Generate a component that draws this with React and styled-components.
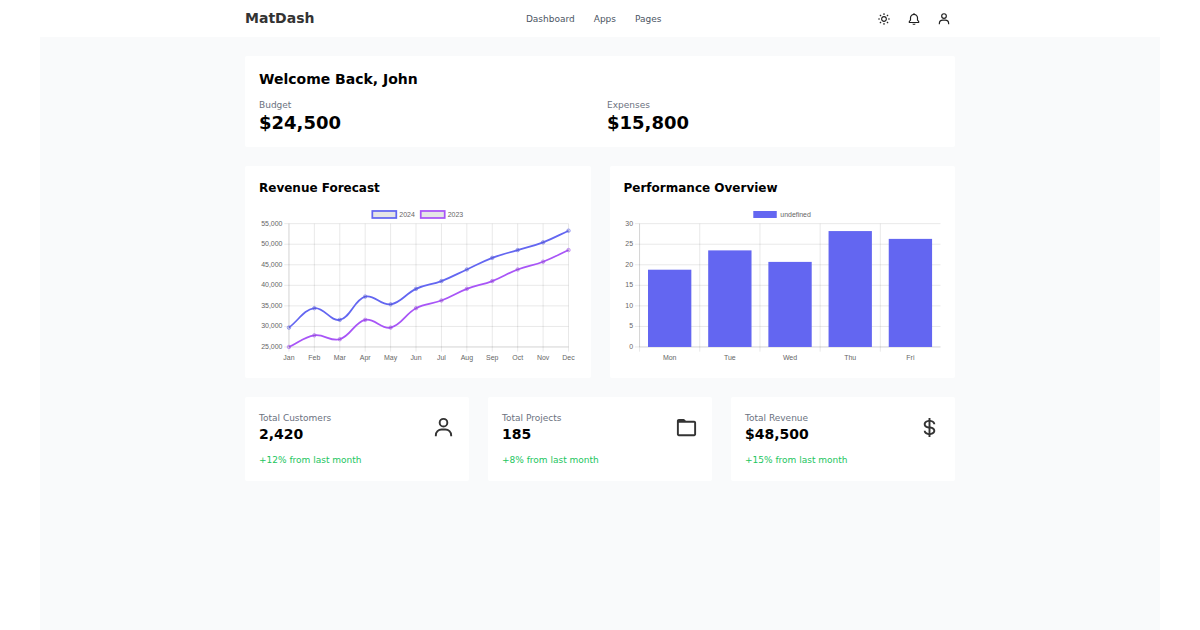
import React from "react";
import styled, { createGlobalStyle } from "styled-components";
import { BiBell, BiDollar, BiFolder, BiSun, BiUser } from "react-icons/bi";

const GlobalStyle = createGlobalStyle`
  * {
    box-sizing: border-box;
  }

  body {
    margin: 0;
    background: #ffffff;
    color: #000000;
    font-family: "DejaVu Sans", sans-serif;
    font-size: 9px;
    line-height: 14px;
  }
`;

const Page = styled.div`
  min-height: 100vh;
  padding: 0 40px;
  display: flex;
  flex-direction: column;
`;
const Container = styled.div`
  width: 100%;
  max-width: 710px;
  margin: 0 auto;
`;
const Header = styled.header`
  background: #ffffff;
`;
const HeaderRow = styled(Container)`
  height: 37px;
  display: flex;
  align-items: center;
  justify-content: space-between;
`;
const Logo = styled.a`
  color: #333333;
  font-size: 14px;
  font-weight: bold;
  line-height: 19px;
  text-decoration: none;
`;
const Nav = styled.nav`
  display: flex;
  gap: 19px;
`;
const NavLink = styled.a`
  color: #4b5563;
  text-decoration: none;
`;
const Actions = styled.div`
  display: flex;
  gap: 8px;
`;
const IconButton = styled.button`
  display: flex;
  padding: 4px;
  border: 0;
  background: none;
  color: #1f1f1f;
  font-size: 14px;
  cursor: pointer;
`;
const Main = styled.main`
  flex: 1;
  padding: 19px 0;
  background: #f9fafb;
`;
const Content = styled(Container)`
  display: flex;
  flex-direction: column;
  gap: 19px;
`;
const Grid = styled.div`
  display: grid;
  grid-template-columns: repeat(${({ $columns }) => $columns}, 1fr);
  gap: ${({ $gap }) => $gap || 19}px;
`;
const Card = styled.section`
  min-width: 0;
  padding: 14px;
  border-radius: 2px;
  background: #ffffff;
`;
const Heading = styled.h1`
  margin: 0 0 9px;
  font-size: 14px;
  line-height: 19px;
`;
const CardTitle = styled.h2`
  margin: 0 0 9px;
  font-size: 12px;
  line-height: 16px;
`;
const Label = styled.p`
  margin: 0;
  color: #6b7280;
`;
const Amount = styled.p`
  margin: 0;
  font-size: 18px;
  font-weight: bold;
  line-height: 21px;
`;
const StatRow = styled.div`
  display: flex;
  align-items: center;
  justify-content: space-between;
`;
const StatValue = styled.p`
  margin: 0;
  font-size: 14px;
  font-weight: bold;
  line-height: 19px;
`;
const StatIcon = styled.span`
  display: flex;
  color: #333333;
  font-size: 23px;
`;
const Change = styled.p`
  margin: 9px 0 0;
  color: #22c55e;
`;
const Chart = styled.svg`
  display: block;
  width: 100%;
  height: auto;
  overflow: visible;

  text {
    fill: #666666;
    font-family: "Liberation Sans", Arial, sans-serif;
    font-size: 7px;
  }
`;

const MONTHS = [
  "Jan",
  "Feb",
  "Mar",
  "Apr",
  "May",
  "Jun",
  "Jul",
  "Aug",
  "Sep",
  "Oct",
  "Nov",
  "Dec",
];

const REVENUE = [
  {
    label: "2024",
    color: "#6366f1",
    legendX: 113.5,
    data: [
      29715, 34430, 31600, 37260, 35370, 39145, 41030, 43860, 46690, 48575,
      50460, 53290,
    ],
  },
  {
    label: "2023",
    color: "#a855f7",
    legendX: 162,
    data: [
      25000, 27830, 26885, 31600, 29715, 34430, 36315, 39145, 41030, 43860,
      45745, 48575,
    ],
  },
];

const PERFORMANCE = [
  { day: "Mon", value: 18.8 },
  { day: "Tue", value: 23.5 },
  { day: "Wed", value: 20.7 },
  { day: "Thu", value: 28.2 },
  { day: "Fri", value: 26.3 },
];

const STATS = [
  { label: "Total Customers", value: "2,420", change: "+12%", icon: BiUser },
  { label: "Total Projects", value: "185", change: "+8%", icon: BiFolder },
  { label: "Total Revenue", value: "$48,500", change: "+15%", icon: BiDollar },
];

const TOP = 18.7;
const BOTTOM = 142.2;
const TICK = 4.7;
const GRID_COLOR = "rgba(0, 0, 0, 0.1)";

const scaleY = (value, min, max) =>
  BOTTOM - ((value - min) / (max - min)) * (BOTTOM - TOP);

const clampY = (y) => Math.min(BOTTOM, Math.max(TOP, y));

// control points are weighted by the distance to the neighbouring points
const smoothPath = (points, tension = 0.4) => {
  const controls = points.map((point, i) => {
    const prev = points[i - 1] || point;
    const next = points[i + 1] || point;
    const before = Math.hypot(point.x - prev.x, point.y - prev.y);
    const after = Math.hypot(next.x - point.x, next.y - point.y);
    const a = (tension * before) / (before + after);
    const b = (tension * after) / (before + after);
    return {
      inX: point.x - a * (next.x - prev.x),
      inY: clampY(point.y - a * (next.y - prev.y)),
      outX: point.x + b * (next.x - prev.x),
      outY: clampY(point.y + b * (next.y - prev.y)),
    };
  });

  return points.reduce((path, point, i) => {
    if (i === 0) return `M${point.x} ${point.y}`;
    const from = controls[i - 1];
    const to = controls[i];
    return `${path} C${from.outX} ${from.outY} ${to.inX} ${to.inY} ${point.x} ${point.y}`;
  }, "");
};

const GridLines = ({ left, right, columns, ticks, min, max }) => (
  <g stroke={GRID_COLOR} strokeWidth="0.9">
    {columns.map((x) => (
      <line key={x} x1={x} x2={x} y1={TOP} y2={BOTTOM + TICK} />
    ))}
    {ticks.map((tick) => {
      const y = scaleY(tick, min, max);
      return <line key={tick} x1={left - TICK} x2={right} y1={y} y2={y} />;
    })}
    <line x1={left} x2={left} y1={TOP} y2={BOTTOM} />
    <line x1={left} x2={right} y1={BOTTOM} y2={BOTTOM} />
  </g>
);

const TickLabels = ({ left, ticks, min, max }) =>
  ticks.map((tick) => (
    <text
      key={tick}
      x={left - 6.5}
      y={scaleY(tick, min, max) + 2}
      textAnchor="end"
    >
      {tick.toLocaleString("en-US")}
    </text>
  ));

const RevenueChart = () => {
  const left = 30;
  const right = 310;
  const min = 25000;
  const max = 55000;
  const ticks = [25000, 30000, 35000, 40000, 45000, 50000, 55000];
  const columns = MONTHS.map((_, i) => left + (i * (right - left)) / 11);

  return (
    <Chart viewBox="0 0 318 159" role="img" aria-label="Revenue by month">
      <GridLines
        left={left}
        right={right}
        columns={columns}
        ticks={ticks}
        min={min}
        max={max}
      />
      <TickLabels left={left} ticks={ticks} min={min} max={max} />
      {MONTHS.map((month, i) => (
        <text key={month} x={columns[i]} y="155" textAnchor="middle">
          {month}
        </text>
      ))}
      {[...REVENUE].reverse().map(({ label, color, data }) => {
        const points = data.map((value, i) => ({
          x: columns[i],
          y: scaleY(value, min, max),
        }));
        return (
          <g key={label} stroke={color}>
            <path d={smoothPath(points)} fill="none" strokeWidth="1.75" />
            {points.map(({ x, y }) => (
              <circle
                key={x}
                cx={x}
                cy={y}
                r="1.75"
                fill={GRID_COLOR}
                strokeWidth="0.6"
              />
            ))}
          </g>
        );
      })}
      {REVENUE.map(({ label, color, legendX }) => (
        <g key={label}>
          <rect
            x={legendX}
            y="6"
            width="24"
            height="7"
            fill={GRID_COLOR}
            stroke={color}
            strokeWidth="1.75"
          />
          <text x={legendX + 27} y="12">
            {label}
          </text>
        </g>
      ))}
    </Chart>
  );
};

const PerformanceChart = () => {
  const left = 15.6;
  const right = 317;
  const min = 0;
  const max = 30;
  const ticks = [0, 5, 10, 15, 20, 25, 30];
  const step = (right - left) / PERFORMANCE.length;
  const barWidth = step * 0.72;

  return (
    <Chart viewBox="0 0 318 159" role="img" aria-label="Performance by day">
      <GridLines
        left={left}
        right={right}
        columns={PERFORMANCE.map((_, i) => left + i * step)}
        ticks={ticks}
        min={min}
        max={max}
      />
      <TickLabels left={left} ticks={ticks} min={min} max={max} />
      {PERFORMANCE.map(({ day, value }, i) => {
        const center = left + (i + 0.5) * step;
        const y = scaleY(value, min, max);
        return (
          <g key={day}>
            <rect
              x={center - barWidth / 2}
              y={y}
              width={barWidth}
              height={BOTTOM - y}
              fill="#6366f1"
            />
            <text x={center} y="155" textAnchor="middle">
              {day}
            </text>
          </g>
        );
      })}
      <rect x="129.5" y="6" width="23.5" height="7" fill="#6366f1" />
      <text x="156.5" y="12">
        undefined
      </text>
    </Chart>
  );
};

const StatCard = ({ stat }) => {
  const Icon = stat.icon;
  return (
    <Card>
      <StatRow>
        <div>
          <Label>{stat.label}</Label>
          <StatValue>{stat.value}</StatValue>
        </div>
        <StatIcon>
          <Icon />
        </StatIcon>
      </StatRow>
      <Change>{stat.change} from last month</Change>
    </Card>
  );
};

const App = () => {
  return (
    <Page>
      <GlobalStyle />
      <Header>
        <HeaderRow>
          <Logo href="#">MatDash</Logo>
          <Nav>
            <NavLink href="#dashboard">Dashboard</NavLink>
            <NavLink href="#apps">Apps</NavLink>
            <NavLink href="#pages">Pages</NavLink>
          </Nav>
          <Actions>
            <IconButton type="button" aria-label="Toggle theme">
              <BiSun />
            </IconButton>
            <IconButton type="button" aria-label="Notifications">
              <BiBell />
            </IconButton>
            <IconButton type="button" aria-label="Profile">
              <BiUser />
            </IconButton>
          </Actions>
        </HeaderRow>
      </Header>
      <Main>
        <Content>
          <Card>
            <Heading>Welcome Back, John</Heading>
            <Grid $columns={2} $gap={14}>
              <div>
                <Label>Budget</Label>
                <Amount>$24,500</Amount>
              </div>
              <div>
                <Label>Expenses</Label>
                <Amount>$15,800</Amount>
              </div>
            </Grid>
          </Card>
          <Grid $columns={2}>
            <Card>
              <CardTitle>Revenue Forecast</CardTitle>
              <RevenueChart />
            </Card>
            <Card>
              <CardTitle>Performance Overview</CardTitle>
              <PerformanceChart />
            </Card>
          </Grid>
          <Grid $columns={3}>
            {STATS.map((stat) => (
              <StatCard key={stat.label} stat={stat} />
            ))}
          </Grid>
        </Content>
      </Main>
    </Page>
  );
};

export default App;
